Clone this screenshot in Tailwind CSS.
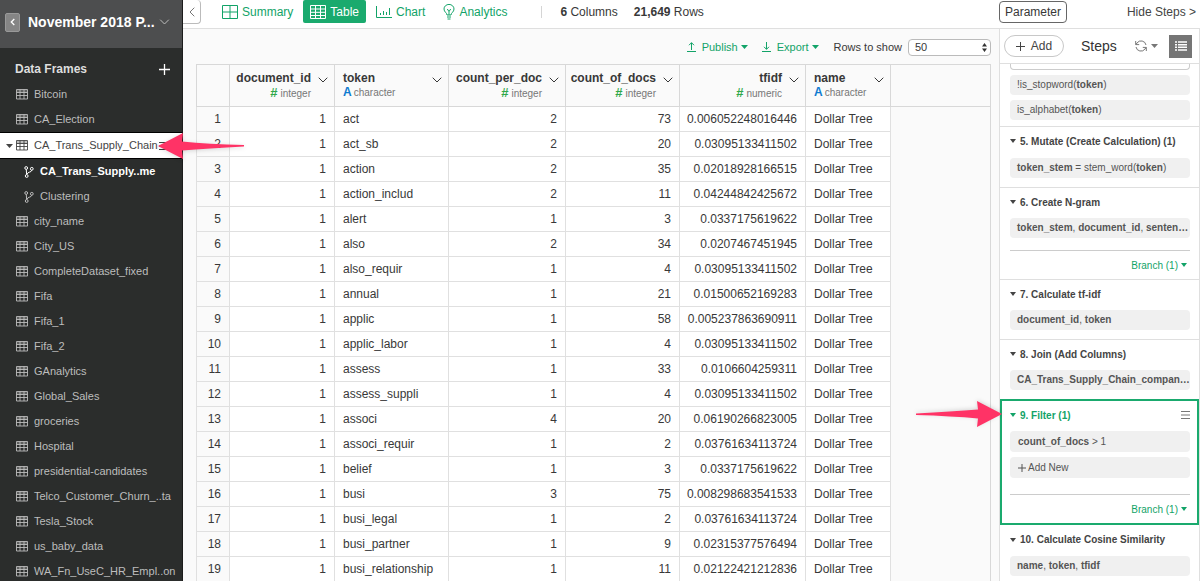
<!DOCTYPE html>
<html lang="en">
<head>
  <meta charset="UTF-8" />
  <meta name="viewport" content="width=device-width, initial-scale=1.0" />
  <title>November 2018 Project</title>
  <script src="https://cdn.jsdelivr.net/npm/@tailwindcss/browser@4"></script>
</head>

<body class="bg-[#fafafa] font-['Liberation_Sans',Arial,sans-serif] text-[#383838]">
  <!-- shared icons -->
  <svg class="hidden" aria-hidden="true">
    <symbol id="grid" viewBox="0 0 12 11">
      <rect x="1" y="1" width="10" height="3" fill="currentColor" opacity=".35" />
      <path d="M.5 .5h11v9.500H.5zM.5 3.500h11M.5 6.500h11M4 .5v9.500M8 .5v9.500" fill="none" stroke="currentColor" stroke-width=".9" />
    </symbol>
    <symbol id="branch" viewBox="0 0 10 12">
      <g fill="none" stroke="currentColor">
        <circle cx="2.2" cy="2" r="1.4" /><circle cx="2.7" cy="10" r="1.4" /><circle cx="7.8" cy="2.8" r="1.4" />
        <path d="M2.3 3.4L2.6 8.6M7.7 4.2C7.6 6.6 3.5 5.6 2.8 8.4" />
      </g>
    </symbol>
    <symbol id="chevron" viewBox="0 0 10 6">
      <path d="M.7 .7L5 5 9.3 .7" fill="none" stroke="currentColor" />
    </symbol>
    <symbol id="caret" viewBox="0 0 6 4" preserveAspectRatio="none">
      <path d="M0 0h6L3 4z" fill="currentColor" />
    </symbol>
    <symbol id="arrow" viewBox="0 0 86 26">
      <path d="M0 13L25 0 24 8.500Q50 11 86 12v1.500Q50 15.500 24 17.500L25 26z" fill="#ff3366" />
    </symbol>
  </svg>

  <div class="flex h-screen overflow-hidden">
    <!-- sidebar -->
    <aside class="relative z-10 w-[183px] shrink-0 border-r border-[#1c1c1c] bg-[#2b2d2c] text-[#bdbdbd]">
      <header class="flex h-12 items-center bg-[#4d4e4f] pb-1 pl-[5px]">
        <button aria-label="Back" class="flex h-[19px] w-[15px] items-center justify-center rounded-xs border border-[#999] bg-[#858585] text-white">
          <svg class="h-2 w-[5px]" viewBox="0 0 5 8"><path d="M4.300 1L1.300 4l3 3" fill="none" stroke="currentColor" stroke-width="1.300" /></svg>
        </button>
        <h1 class="ml-2 text-sm font-bold text-white">November 2018 P...</h1>
        <svg class="ml-1 h-[6px] w-[11px]"><use href="#chevron" /></svg>
      </header>

      <div class="flex h-[34px] items-center justify-between pt-2 pr-3 pl-[15px]">
        <h2 class="text-[12px] font-bold text-[#dedede]">Data Frames</h2>
        <button aria-label="Add data frame" class="text-white">
          <svg class="h-[11px] w-[11px]" viewBox="0 0 11 11"><path d="M5.500 0v11M0 5.500h11" stroke="currentColor" stroke-width="1.300" /></svg>
        </button>
      </div>

      <ul id="frames" class="text-[11px]"></ul>
    </aside>

    <div class="flex min-w-0 flex-1 flex-col">
      <!-- top bar -->
      <header class="flex h-[29px] shrink-0 items-start border-b border-[#dfdfdf] bg-white text-[12px]">
        <button aria-label="Collapse sidebar" class="flex h-6 w-[18px] shrink-0 items-center justify-center rounded-br-sm rounded-tr-sm border-r border-b border-[#bbb] text-[#777]">
          <svg class="h-[10px] w-[6px]" viewBox="0 0 6 10"><path d="M5.300 .7L1 5l4.300 4.300" fill="none" stroke="currentColor" /></svg>
        </button>
        <nav class="ml-[14px] flex h-[23px] items-center text-[#12a368]">
          <a href="#" class="flex h-full items-center gap-1 px-[7px]">
            <svg class="h-[14px] w-4" viewBox="0 0 16 14"><path d="M.5 .5h15v13H.5zM8 .5v13M.5 7h15" fill="none" stroke="currentColor" /></svg>
            Summary
          </a>
          <a href="#" class="ml-[3px] flex h-full items-center gap-1 rounded-xs bg-[#1aaa6e] px-[7px] text-white">
            <svg class="h-[14px] w-4" viewBox="0 0 16 14"><path d="M.5 .5h15v13H.5zM.5 4h15M.5 7.300h15M.5 10.500h15M5.500 .5v13M10.500 .5v13" fill="none" stroke="currentColor" /></svg>
            Table
          </a>
          <a href="#" class="ml-[3px] flex h-full items-center gap-1 px-[7px]">
            <svg class="h-[14px] w-4" viewBox="0 0 16 14"><path d="M.5 1v11.500H16M4.500 8v2M7.500 6v4M10.500 7v3M13.500 3v7" fill="none" stroke="currentColor" /></svg>
            Chart
          </a>
          <a href="#" class="ml-1 flex h-full items-center gap-1 px-[7px]">
            <svg class="h-4 w-3" viewBox="0 0 12 16"><path d="M4 11C4 8.800 1 8 1 5a5 4.600 0 0 1 10 0c0 3-3 3.800-3 6zM4 13h4M4.500 15h3M4.300 5L6 7.500 7.700 5M6 7.500V11" fill="none" stroke="currentColor" /></svg>
            Analytics
          </a>
        </nav>
        <div class="ml-[27px] flex h-6 items-center">
          <span class="h-3 w-px bg-[#d5d5d5]"></span>
          <span class="ml-[18px]"><b>6</b> Columns</span>
          <span class="ml-4"><b>21,649</b> Rows</span>
        </div>
        <div class="ml-auto flex w-[201px] items-center justify-between pr-1">
          <button class="mt-px h-[22px] rounded-sm border border-[#666] bg-white px-[5px]">Parameter</button>
          <button class="text-[#444]">Hide Steps &gt;</button>
        </div>
      </header>

      <div class="flex min-h-0 flex-1">
        <!-- data grid -->
        <main class="min-w-0 flex-1 pr-2 pl-[13px]">
          <div class="flex h-[35px] items-center justify-end pt-px text-[11px]">
            <button class="flex items-center text-[#12a368]">
              <svg class="mr-[6px] h-[10px] w-[9px]" viewBox="0 0 9 10"><path d="M4.500 8V.7M2 3.200L4.500 .7 7 3.200M0 9.500h9" fill="none" stroke="currentColor" /></svg>
              Publish
              <svg class="ml-[3px] h-1 w-[7px]"><use href="#caret" /></svg>
            </button>
            <button class="ml-[14px] flex items-center text-[#12a368]">
              <svg class="mr-[6px] h-[10px] w-[9px]" viewBox="0 0 9 10"><path d="M4.500 0v7.300M2 4.800L4.500 7.300 7 4.800M0 9.500h9" fill="none" stroke="currentColor" /></svg>
              Export
              <svg class="ml-[3px] h-1 w-[7px]"><use href="#caret" /></svg>
            </button>
            <label for="rowCount" class="ml-[15px]">Rows to show</label>
            <div class="relative ml-[6px]">
              <select id="rowCount" class="h-[17px] w-[83px] appearance-none rounded-sm border border-[#bbb] bg-white pl-[6px] leading-none">
                <option>50</option>
                <option>100</option>
                <option>500</option>
              </select>
              <svg class="pointer-events-none absolute top-1 right-1 h-[9px] w-[5px]" viewBox="0 0 5 9"><path d="M0 3.600h5L2.500 0zM0 5.400h5L2.500 9z" fill="#333" /></svg>
            </div>
          </div>

          <table class="w-full table-fixed border-collapse border border-[#d8d8d8] text-[12px]">
            <colgroup>
              <col class="w-[33px]" />
              <col class="w-[105px]" />
              <col class="w-[114px]" />
              <col class="w-[117px]" />
              <col class="w-[114px]" />
              <col class="w-[126px]" />
              <col class="w-[85px]" />
              <col />
            </colgroup>
            <thead>
              <tr id="columns" class="h-[42px]"></tr>
            </thead>
            <tbody id="rows"></tbody>
          </table>
        </main>

        <!-- steps -->
        <aside class="w-[201px] shrink-0 border-r border-l border-[#dfdfdf] bg-white text-[10px] text-[#555]">
          <div class="flex h-[35px] items-center border-b border-[#dfdfdf] pr-[7px] pl-1">
            <button class="flex h-[22px] w-[60px] items-center justify-center gap-[6px] rounded-full border border-[#c8c8c8] text-[12px] text-[#444]">
              <svg class="h-[9px] w-[9px]" viewBox="0 0 9 9"><path d="M4.500 0v9M0 4.500h9" stroke="currentColor" /></svg>
              Add
            </button>
            <h2 class="ml-[17px] text-sm text-[#333]">Steps</h2>
            <button aria-label="Refresh" class="ml-auto flex items-center gap-1 text-[#777]">
              <svg class="h-3 w-3" viewBox="0 0 12 12"><path d="M11 5A5 5 0 0 0 2 3L.8 4.500M.7 1v3.600h3.500M1 7a5 5 0 0 0 9 2l1.200-1.500M11.300 11V7.400H7.800" fill="none" stroke="currentColor" /></svg>
              <svg class="h-1 w-[7px]"><use href="#caret" /></svg>
            </button>
            <button aria-label="List view" class="ml-[11px] flex h-[23px] w-[23px] items-center justify-center bg-[#757575]">
              <svg class="h-[10px] w-3" viewBox="0 0 12 10"><path d="M0 1h2M0 3.700h2M0 6.300h2M0 9h2M3 1h9M3 3.700h9M3 6.300h9M3 9h9" stroke="#fff" stroke-width="1.400" /></svg>
            </button>
          </div>

          <section class="border-b border-[#dfdfdf] pr-[9px] pb-[6px] pl-[10px]">
            <div class="h-[6px] rounded-b-sm border-x border-b border-[#ccc]"></div>
            <p class="mt-[5px] h-5 rounded-sm bg-[#f0f0f0] px-[7px] leading-5">!is_stopword(<b>token</b>)</p>
            <p class="mt-[5px] h-5 rounded-sm bg-[#f0f0f0] px-[7px] leading-5">is_alphabet(<b>token</b>)</p>
          </section>

          <section class="border-b border-[#dfdfdf] pr-[9px] pb-[9px] pl-[10px]">
            <h3 class="flex h-7 items-center gap-1 font-bold text-[#444]">
              <svg class="h-1 w-[6px]"><use href="#caret" /></svg>5. Mutate (Create Calculation) (1)
            </h3>
            <p class="mt-[3px] h-5 rounded-sm bg-[#f0f0f0] px-[7px] leading-5"><b>token_stem</b> = stem_word(<b>token</b>)</p>
          </section>

          <section class="border-b border-[#dfdfdf] pr-[9px] pl-[10px]">
            <h3 class="flex h-7 items-center gap-1 font-bold text-[#444]">
              <svg class="h-1 w-[6px]"><use href="#caret" /></svg>6. Create N-gram
            </h3>
            <p class="mt-[2px] h-5 whitespace-nowrap rounded-sm bg-[#f0f0f0] pl-[7px] leading-5"><b>token_stem</b>, <b>document_id</b>, <b>senten…</b></p>
            <div class="mt-3 flex h-[29px] items-center justify-end border-t border-[#ccc] pr-[3px]">
              <button class="flex items-center gap-[3px] text-[#12a368]">Branch (1) <svg class="h-1 w-[6px]"><use href="#caret" /></svg></button>
            </div>
          </section>

          <section class="border-b border-[#dfdfdf] pr-[9px] pb-[9px] pl-[10px]">
            <h3 class="flex h-7 items-center gap-1 font-bold text-[#444]">
              <svg class="h-1 w-[6px]"><use href="#caret" /></svg>7. Calculate tf-idf
            </h3>
            <p class="mt-[2px] h-5 rounded-sm bg-[#f0f0f0] px-[7px] leading-5"><b>document_id</b>, <b>token</b></p>
          </section>

          <section class="pr-[9px] pb-[9px] pl-[10px]">
            <h3 class="flex h-7 items-center gap-1 font-bold text-[#444]">
              <svg class="h-1 w-[6px]"><use href="#caret" /></svg>8. Join (Add Columns)
            </h3>
            <p class="mt-[2px] h-5 whitespace-nowrap rounded-sm bg-[#f0f0f0] pl-[7px] font-bold leading-5">CA_Trans_Supply_Chain_compan…</p>
          </section>

          <section class="relative border-2 border-[#1aaa6e] pr-[7px] pl-2">
            <svg class="absolute top-0 -left-[86px] h-[26px] w-[86px] rotate-180 overflow-visible drop-shadow-sm"><use href="#arrow" /></svg>
            <h3 class="flex h-7 items-center gap-1 font-bold text-[#12a368]">
              <svg class="h-1 w-[6px]"><use href="#caret" /></svg>9. Filter (1)
              <button aria-label="Step menu" class="ml-auto text-[#777]">
                <svg class="h-2 w-[9px]" viewBox="0 0 9 8"><path d="M0 .5h9M0 4h9M0 7.500h9" stroke="currentColor" /></svg>
              </button>
            </h3>
            <p class="mt-[2px] h-[21px] rounded-sm bg-[#f0f0f0] px-2 leading-[21px]"><b>count_of_docs</b> &gt; 1</p>
            <button class="mt-[5px] flex h-[21px] w-full items-center gap-[2px] rounded-sm bg-[#f0f0f0] px-2">
              <svg class="h-2 w-2" viewBox="0 0 8 8"><path d="M4 0v8M0 4h8" stroke="currentColor" /></svg>
              Add New
            </button>
            <div class="mt-4 flex h-[29px] items-center justify-end border-t border-[#ccc] pr-[3px]">
              <button class="flex items-center gap-[3px] text-[#12a368]">Branch (1) <svg class="h-1 w-[6px]"><use href="#caret" /></svg></button>
            </div>
          </section>

          <section class="pr-[9px] pb-[9px] pl-[10px]">
            <h3 class="flex h-[29px] items-center gap-1 font-bold text-[#444]">
              <svg class="h-1 w-[6px]"><use href="#caret" /></svg>10. Calculate Cosine Similarity
            </h3>
            <p class="mt-[2px] h-5 rounded-sm bg-[#f0f0f0] px-[7px] leading-5"><b>name</b>, <b>token</b>, <b>tfidf</b></p>
          </section>
        </aside>
      </div>
    </div>
  </div>

  <script>
    const frames = [
      'Bitcoin', 'CA_Election',
      { name: 'CA_Trans_Supply_Chain', branches: ['CA_Trans_Supply..me', 'Clustering'] },
      'city_name', 'City_US', 'CompleteDataset_fixed', 'Fifa', 'Fifa_1', 'Fifa_2', 'GAnalytics',
      'Global_Sales', 'groceries', 'Hospital', 'presidential-candidates',
      'Telco_Customer_Churn_..ta', 'Tesla_Stock', 'us_baby_data', 'WA_Fn_UseC_HR_Empl..on'
    ];

    const frameItem = (name) => `
      <li><a href="#" class="flex h-[25px] items-center gap-[6px] pl-4">
        <svg class="h-[11px] w-3"><use href="#grid" /></svg>${name}
      </a></li>`;

    const openItem = (frame) => `
      <li class="relative">
        <a href="#" class="flex h-[27px] items-center gap-[6px] border-y border-black bg-white pl-4 text-[#444]">
          <svg class="absolute left-[6px] h-1 w-[7px]"><use href="#caret" /></svg>
          <svg class="h-[11px] w-3"><use href="#grid" /></svg>${frame.name}
          <svg class="-ml-[5px] h-2 w-[9px]" viewBox="0 0 9 8"><path d="M0 .5h9M0 4h9M0 7.500h9" stroke="currentColor" /></svg>
        </a>
        <svg class="absolute top-px left-[158px] h-[26px] w-[86px] overflow-visible drop-shadow-sm"><use href="#arrow" /></svg>
      </li>
      ${frame.branches.map((name, i) => `
      <li><a href="#" class="${i === 0 ? 'flex h-[25px] items-center gap-[6px] pl-6 font-bold text-white' : 'flex h-[25px] items-center gap-[6px] pl-6'}">
        <svg class="h-3 w-[10px]"><use href="#branch" /></svg>${name}
      </a></li>`).join('')}`;

    document.getElementById('frames').innerHTML =
      frames.map((f) => (typeof f === 'string' ? frameItem(f) : openItem(f))).join('');

    const columns = [
      ['document_id', 'integer'], ['token', 'character'], ['count_per_doc', 'integer'],
      ['count_of_docs', 'integer'], ['tfidf', 'numeric'], ['name', 'character']
    ];

    const columnHead = ([name, type]) => {
      const text = type === 'character';
      const mark = text
        ? '<b class="mr-[2px] text-[12px] text-[#0f7bd0]">A</b>'
        : '<b class="mr-[3px] text-[13px] text-[#2fa84a]">#</b>';
      return `
      <th class="border border-[#d8d8d8] p-0 align-top font-normal">
        <div class="${text ? 'flex justify-between pt-[6px] pr-[6px] pl-2 text-left' : 'flex justify-end gap-[7px] pt-[6px] pr-[6px] text-right'}">
          <div>
            <div class="font-bold leading-[15px]">${name}</div>
            <div class="text-[10px] leading-[13px] text-[#777]">${mark}${type}</div>
          </div>
          <svg class="mt-[6px] h-[6px] w-[10px] shrink-0"><use href="#chevron" /></svg>
        </div>
      </th>`;
    };

    document.getElementById('columns').innerHTML =
      '<th class="border border-[#d8d8d8]"></th>' + columns.map(columnHead).join('') + '<th class="border border-[#d8d8d8]"></th>';

    // token, count_per_doc, count_of_docs, tfidf
    const rows = [
      ['act', 2, 73, '0.006052248016446'],
      ['act_sb', 2, 20, '0.03095133411502'],
      ['action', 2, 35, '0.02018928166515'],
      ['action_includ', 2, 11, '0.04244842425672'],
      ['alert', 1, 3, '0.0337175619622'],
      ['also', 2, 34, '0.0207467451945'],
      ['also_requir', 1, 4, '0.03095133411502'],
      ['annual', 1, 21, '0.01500652169283'],
      ['applic', 1, 58, '0.005237863690911'],
      ['applic_labor', 1, 4, '0.03095133411502'],
      ['assess', 1, 33, '0.0106604259311'],
      ['assess_suppli', 1, 4, '0.03095133411502'],
      ['associ', 4, 20, '0.06190266823005'],
      ['associ_requir', 1, 2, '0.03761634113724'],
      ['belief', 1, 3, '0.0337175619622'],
      ['busi', 3, 75, '0.008298683541533'],
      ['busi_legal', 1, 2, '0.03761634113724'],
      ['busi_partner', 1, 9, '0.02315377576494'],
      ['busi_relationship', 1, 11, '0.02122421212836']
    ];

    document.getElementById('rows').innerHTML = rows.map(([token, perDoc, docs, tfidf], i) => `
      <tr class="h-[25px] text-right">
        <td class="border border-[#e0e0e0] py-0 pr-2">${i + 1}</td>
        <td class="border border-[#e0e0e0] bg-white py-0 pr-2">1</td>
        <td class="border border-[#e0e0e0] bg-white py-0 pl-2 text-left">${token}</td>
        <td class="border border-[#e0e0e0] bg-white py-0 pr-2">${perDoc}</td>
        <td class="border border-[#e0e0e0] bg-white py-0 pr-2">${docs}</td>
        <td class="border border-[#e0e0e0] bg-white py-0 pr-2">${tfidf}</td>
        <td class="border border-[#e0e0e0] bg-white py-0 pl-2 text-left">Dollar Tree</td>
        <td></td>
      </tr>`).join('');
  </script>
</body>
</html>
